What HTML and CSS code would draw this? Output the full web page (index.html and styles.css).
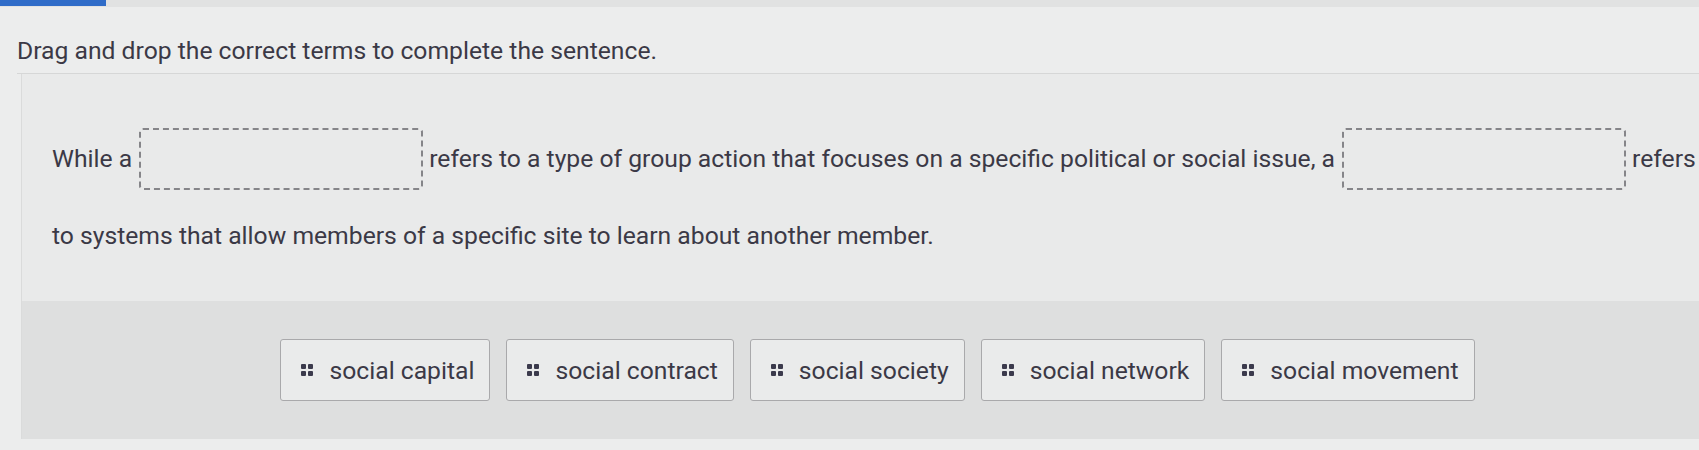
FILE: index.html
```html
<!DOCTYPE html>
<html lang="en">
<head>
<meta charset="utf-8">
<title>Drag and drop</title>
<link rel="stylesheet" href="styles.css">
</head>
<body>
<div class="topbar"><div class="tab"></div></div>
<div class="page">
  <div class="prompt">Drag and drop the correct terms to complete the sentence.</div>
  <div class="content">
    <div class="sentence">
      <div class="line">While a<span class="drop"></span>refers to a type of group action that focuses on a specific political or social issue, a<span class="drop"></span>refers</div>
      <div class="line">to systems that allow members of a specific site to learn about another member.</div>
    </div>
    <div class="bank">
      <div class="chip"><span class="grip"><i></i><i></i><i></i><i></i></span>social capital</div>
      <div class="chip"><span class="grip"><i></i><i></i><i></i><i></i></span>social contract</div>
      <div class="chip"><span class="grip"><i></i><i></i><i></i><i></i></span>social society</div>
      <div class="chip"><span class="grip"><i></i><i></i><i></i><i></i></span>social network</div>
      <div class="chip"><span class="grip"><i></i><i></i><i></i><i></i></span>social movement</div>
    </div>
  </div>
</div>
</body>
</html>
```
FILE: styles.css
```css
html, body {
  margin: 0;
  padding: 0;
  overflow: hidden;
}
body {
  background: #eceded;
  font-family: Roboto, "Liberation Sans", sans-serif;
  color: #3b3946;
  width: 1760px;
  height: 450px;
}
.topbar {
  height: 7px;
  background: #e1e2e2;
}
.tab {
  width: 106px;
  height: 6px;
  background: #2f6cc8;
}
.prompt {
  margin-left: 17px;
  padding-top: 29px;
  height: 37px;
  line-height: 30px;
  font-size: 24.7px;
  border-bottom: 1px solid #d6d7d7;
}
.content {
  margin-left: 21px;
  width: 1711px;
  border-left: 1px solid #dadbdb;
  background: #e9eaea;
}
.sentence {
  padding: 46px 0 27px 30px;
  font-size: 24.7px;
}
.line {
  height: 77px;
  display: flex;
  align-items: center;
  white-space: nowrap;
}
.drop {
  display: inline-block;
  width: 280px;
  height: 58px;
  margin: 0 6px 0 7px;
  border: 2px dashed #858589;
  border-radius: 4px;
}
.bank {
  height: 138px;
  background: #dedfdf;
  display: flex;
  justify-content: center;
  align-items: center;
  gap: 16px;
}
.chip {
  height: 60px;
  display: flex;
  align-items: center;
  padding: 0 15px 0 20px;
  border: 1px solid #a9a9ab;
  border-radius: 3px;
  background: #eaebeb;
  font-size: 24.7px;
  white-space: nowrap;
}
.grip {
  display: grid;
  grid-template-columns: 5px 5px;
  grid-template-rows: 5px 5px;
  gap: 2px;
  margin-right: 16px;
}
.grip i {
  display: block;
  background: #3b3a4c;
  border-radius: 1px;
}
```
